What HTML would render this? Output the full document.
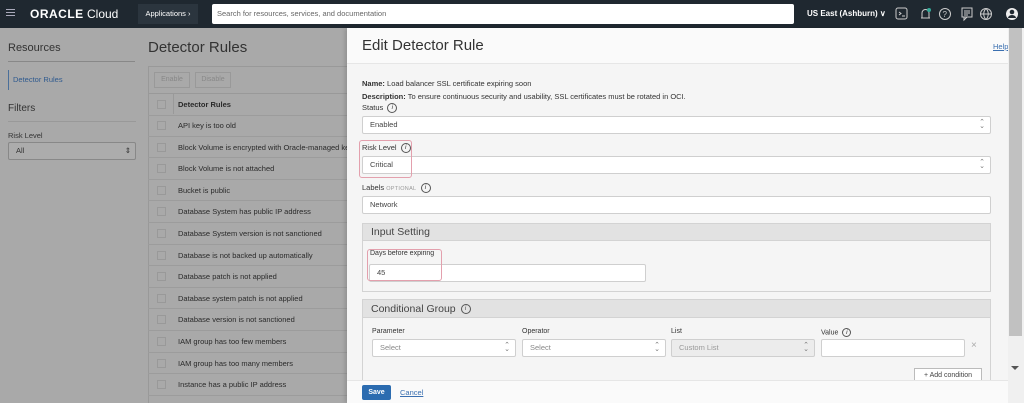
<!DOCTYPE html>
<html><head><meta charset="utf-8"><style>
*{box-sizing:border-box;margin:0;padding:0}
body{width:1024px;height:403px;overflow:hidden;position:relative;font-family:"Liberation Sans",Arial,sans-serif;font-size:8px;color:#333;background:#a9a9a9}
.a{position:absolute}
.hdr{left:0;top:0;width:1024px;height:28px;background:#1f2830}
.row{position:absolute;left:148px;width:200px;height:21.6px;border-bottom:1px solid #9c9c9c;font-size:7.5px;color:#2a2a2a;line-height:21px;white-space:nowrap;overflow:hidden}
.row .cb{position:absolute;left:9px;top:6px;width:9px;height:9px;border:1px solid #999;background:#a9a9a9}
.row span{position:absolute;left:30px}
.inp{position:absolute;background:#fff;border:1px solid #cfcfcf;border-radius:2px;font-size:7.5px;color:#444;padding-left:7px}
.arr{position:absolute;right:5px;top:50%;transform:translateY(-50%);font-size:7px;color:#777;line-height:4px}
.lbl{position:absolute;font-size:7.5px;color:#333;white-space:nowrap}
.i{display:inline-block;width:10px;height:10px;border:1px solid #555;border-radius:50%;font-size:6.5px;text-align:center;line-height:8px;font-style:italic;vertical-align:middle;margin-left:2px}
.red{position:absolute;border:1.5px solid #e3a0ad;border-radius:3px}
</style></head><body>
<div class="a hdr"></div>
<div class="a" style="left:6px;top:9px;width:9px;height:1px;background:#aab;box-shadow:0 3px #aab,0 6px #aab"></div>
<div class="a" style="left:30px;top:7px;color:#fff;font-size:12px;font-weight:bold;letter-spacing:.5px">ORACLE<span style="font-weight:normal;letter-spacing:0"> Cloud</span></div>
<div class="a" style="left:138px;top:4px;width:60px;height:20px;background:#2b353e;color:#fff;font-size:7.5px;line-height:20px;text-align:center">Applications ›</div>
<div class="a" style="left:212px;top:4px;width:582px;height:20px;background:#fff;border-radius:2px;color:#666;font-size:7.5px;line-height:20px;padding-left:5px">Search for resources, services, and documentation</div>
<div class="a" style="left:807px;top:9px;color:#fff;font-size:8px;font-weight:bold">US East (Ashburn) ∨</div>
<svg class="a" style="left:890px;top:5px" width="134" height="18" fill="none" stroke="#ccc" stroke-width="1">
<rect x="6" y="3" width="11" height="11" rx="2"/><path d="M9 7l2 1.5-2 1.5M12 11h3"/>
<path d="M31 13h9M32 13v-5a3.5 3.5 0 017 0v5" /><circle cx="39" cy="5" r="2" fill="#3a9" stroke="none"/>
<circle cx="55" cy="9" r="5.5"/><text x="52.5" y="12" font-size="8" fill="#ccc" stroke="none" font-family="Liberation Sans">?</text>
<rect x="72" y="3" width="10" height="9"/><path d="M74 6h6M74 8h6M74 10h4M74 12v3l3-3"/>
<circle cx="96" cy="9" r="5.5"/><path d="M90.5 9h11M96 3.5c-3 3-3 8 0 11M96 3.5c3 3 3 8 0 11"/>
<circle cx="122" cy="9" r="6" fill="#eee" stroke="none"/><circle cx="122" cy="7" r="2.3" fill="#1f2830" stroke="none"/><path d="M118 13a4 3 0 018 0" fill="#1f2830" stroke="none"/>
</svg>
<div class="a" style="left:8px;top:42px;font-size:11px;color:#333">Resources</div>
<div class="a" style="left:8px;top:61px;width:127px;height:1px;background:#888"></div>
<div class="a" style="left:8px;top:70px;width:1px;height:20px;background:#4a6f9a"></div>
<div class="a" style="left:13px;top:75px;font-size:7.5px;color:#2f5a8f">Detector Rules</div>
<div class="a" style="left:8px;top:103px;font-size:10px;color:#333">Filters</div>
<div class="a" style="left:8px;top:121px;width:128px;height:1px;background:#999"></div>
<div class="a" style="left:8px;top:131px;font-size:7.5px;color:#333">Risk Level</div>
<div class="a" style="left:8px;top:142px;width:128px;height:18px;border:1px solid #888;border-radius:2px;background:#acacac;font-size:7.5px;padding-left:7px;line-height:16px;color:#333">All<span style="position:absolute;right:4px;top:0">⇕</span></div>
<div class="a" style="left:148px;top:39px;font-size:15px;color:#333">Detector Rules</div>
<div class="a" style="left:148px;top:66px;width:200px;height:337px;border-left:1px solid #999;border-top:1px solid #999"></div>
<div class="a" style="left:154px;top:72px;width:36px;height:16px;border:1px solid #999;font-size:7px;color:#888;line-height:14px;text-align:center">Enable</div>
<div class="a" style="left:195px;top:72px;width:36px;height:16px;border:1px solid #999;font-size:7px;color:#888;line-height:14px;text-align:center">Disable</div>
<div class="a" style="left:148px;top:93px;width:200px;height:1px;background:#999"></div>
<div class="row" style="top:94px;font-weight:bold"><div class="cb"></div><div style="position:absolute;left:25px;top:0;width:1px;height:20px;background:#999"></div><span>Detector Rules</span></div>
<div class="row" style="top:115px"><div class="cb"></div><span>API key is too old</span></div>
<div class="row" style="top:136.6px"><div class="cb"></div><span>Block Volume is encrypted with Oracle-managed key</span></div>
<div class="row" style="top:158.2px"><div class="cb"></div><span>Block Volume is not attached</span></div>
<div class="row" style="top:179.8px"><div class="cb"></div><span>Bucket is public</span></div>
<div class="row" style="top:201.4px"><div class="cb"></div><span>Database System has public IP address</span></div>
<div class="row" style="top:223px"><div class="cb"></div><span>Database System version is not sanctioned</span></div>
<div class="row" style="top:244.6px"><div class="cb"></div><span>Database is not backed up automatically</span></div>
<div class="row" style="top:266.2px"><div class="cb"></div><span>Database patch is not applied</span></div>
<div class="row" style="top:287.8px"><div class="cb"></div><span>Database system patch is not applied</span></div>
<div class="row" style="top:309.4px"><div class="cb"></div><span>Database version is not sanctioned</span></div>
<div class="row" style="top:331px"><div class="cb"></div><span>IAM group has too few members</span></div>
<div class="row" style="top:352.6px"><div class="cb"></div><span>IAM group has too many members</span></div>
<div class="row" style="top:374.2px"><div class="cb"></div><span>Instance has a public IP address</span></div>
<div class="a" style="left:347px;top:28px;width:661px;height:375px;background:#f5f5f5;overflow:hidden;box-shadow:-2px 0 4px rgba(0,0,0,.15)">
 <div class="a" style="left:0;top:0;width:661px;height:36px;background:#fafafa;border-bottom:1px solid #e6e6e6"></div>
 <div class="a" style="left:15px;top:9px;font-size:15px;color:#333">Edit Detector Rule</div>
 <div class="a" style="left:646px;top:14px;font-size:7.5px;color:#3a6fb0;text-decoration:underline">Help</div>
 <div class="lbl" style="left:15px;top:51px"><b>Name:</b> Load balancer SSL certificate expiring soon</div>
 <div class="lbl" style="left:15px;top:64px"><b>Description:</b> To ensure continuous security and usability, SSL certificates must be rotated in OCI.</div>
 <div class="lbl" style="left:15px;top:75px">Status <span class="i">i</span></div>
 <div class="inp" style="left:15px;top:88px;width:629px;height:18px;line-height:16px">Enabled<span class="arr">⌃<br>⌄</span></div>
 <div class="lbl" style="left:15px;top:115px">Risk Level <span class="i">i</span></div>
 <div class="inp" style="left:15px;top:128px;width:629px;height:18px;line-height:16px">Critical<span class="arr">⌃<br>⌄</span></div>
 <div class="lbl" style="left:15px;top:155px">Labels <span style="font-size:5.5px;color:#999;letter-spacing:.3px">OPTIONAL</span> <span class="i">i</span></div>
 <div class="inp" style="left:15px;top:168px;width:629px;height:18px;line-height:16px">Network</div>
 <div class="a" style="left:15px;top:195px;width:629px;height:69px;border:1px solid #d3d3d3"></div>
 <div class="a" style="left:15px;top:195px;width:629px;height:18px;background:#e2e2e2;border:1px solid #d3d3d3;font-size:10.5px;color:#444;padding-left:8px;line-height:17px">Input Setting</div>
 <div class="lbl" style="left:23px;top:222px;font-size:7px">Days before expiring</div>
 <div class="inp" style="left:22px;top:236px;width:277px;height:18px;line-height:16px">45</div>
 <div class="a" style="left:15px;top:271px;width:629px;height:110px;border:1px solid #d3d3d3"></div>
 <div class="a" style="left:15px;top:271px;width:629px;height:19px;background:#e2e2e2;border:1px solid #d3d3d3;font-size:10.5px;color:#444;padding-left:8px;line-height:18px">Conditional Group <span class="i" style="font-size:6px">i</span></div>
 <div class="lbl" style="left:25px;top:300px;font-size:7px">Parameter</div>
 <div class="lbl" style="left:175px;top:300px;font-size:7px">Operator</div>
 <div class="lbl" style="left:324px;top:300px;font-size:7px">List</div>
 <div class="lbl" style="left:474px;top:300px;font-size:7px">Value <span class="i" style="width:9px;height:9px;line-height:7px">i</span></div>
 <div class="inp" style="left:25px;top:311px;width:144px;height:18px;line-height:16px;color:#888">Select<span class="arr">⌃<br>⌄</span></div>
 <div class="inp" style="left:175px;top:311px;width:144px;height:18px;line-height:16px;color:#888">Select<span class="arr">⌃<br>⌄</span></div>
 <div class="inp" style="left:324px;top:311px;width:144px;height:18px;line-height:16px;color:#999;background:#ececec">Custom List<span class="arr">⌃<br>⌄</span></div>
 <div class="inp" style="left:474px;top:311px;width:144px;height:18px"></div>
 <div class="a" style="left:624px;top:312px;font-size:10px;color:#aaa">×</div>
 <div class="a" style="left:567px;top:340px;width:68px;height:15px;background:#fff;border:1px solid #bbb;font-size:7px;color:#444;line-height:13px;text-align:center">+ Add condition</div>
 <div class="a" style="left:0;top:352px;width:661px;height:23px;background:#fafafa;border-top:1px solid #e6e6e6"></div>
 <div class="a" style="left:15px;top:357px;width:29px;height:15px;background:#2c6cb0;border-radius:2px;color:#fff;font-size:7px;font-weight:bold;line-height:15px;text-align:center">Save</div>
 <div class="a" style="left:53px;top:360px;font-size:7.5px;color:#3a6fb0;text-decoration:underline">Cancel</div>
</div>
<div class="red" style="left:359px;top:140px;width:53px;height:38px"></div>
<div class="red" style="left:367px;top:249px;width:75px;height:32px"></div>
<div class="a" style="left:1008px;top:28px;width:16px;height:375px;background:#f0f0f0"></div>
<div class="a" style="left:1009px;top:28px;width:13px;height:308px;background:#c1c1c1"></div>
<div class="a" style="left:1011px;top:366px;width:0;height:0;border-left:4px solid transparent;border-right:4px solid transparent;border-top:4px solid #555"></div>
</body></html>
